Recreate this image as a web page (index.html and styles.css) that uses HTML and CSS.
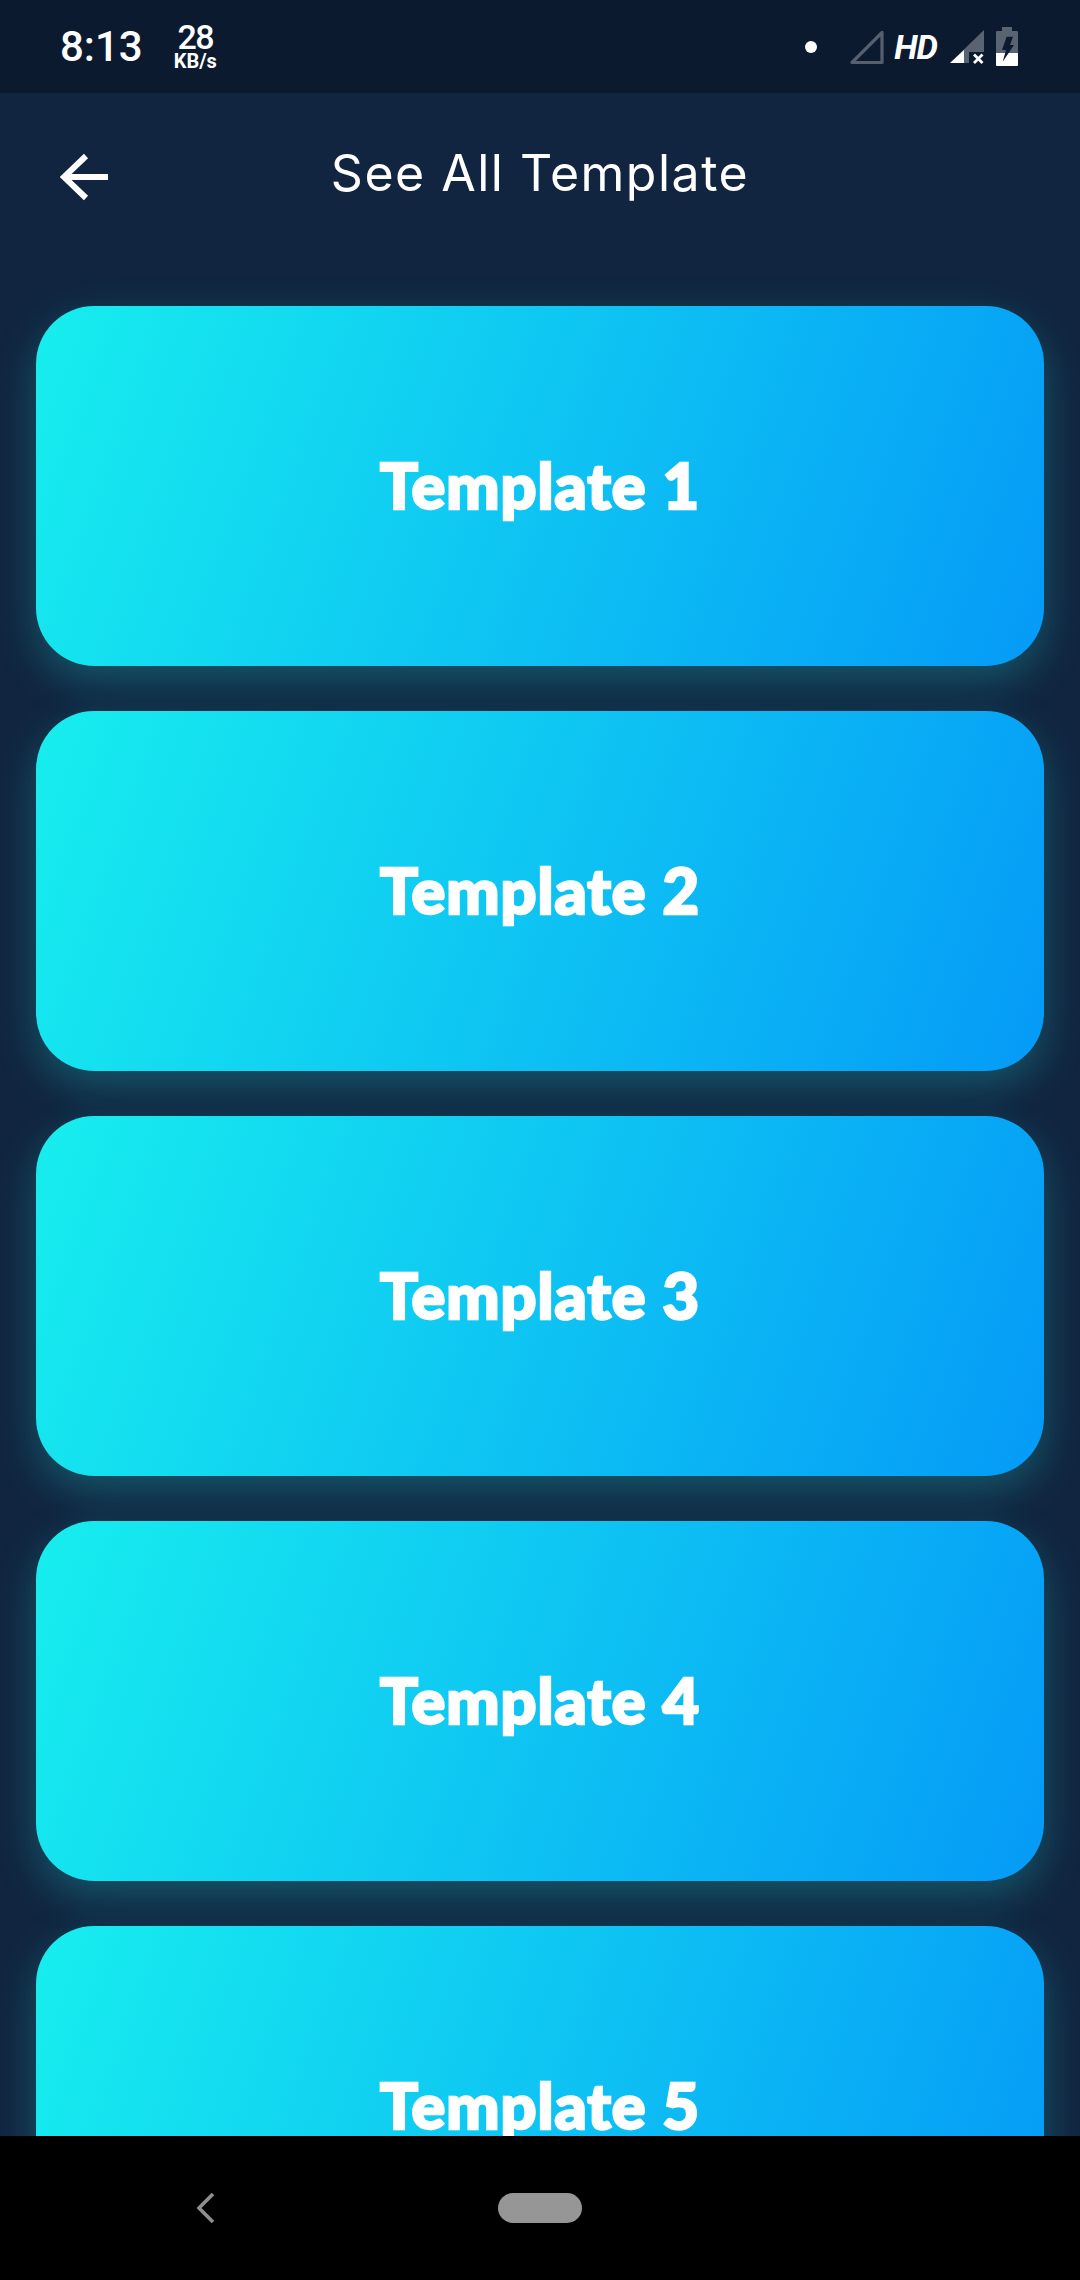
FILE: index.html
```html
<!DOCTYPE html>
<html lang="en">
<head>
  <meta charset="UTF-8">
  <meta name="viewport" content="width=device-width, initial-scale=1.0">
  <title>See All Template</title>
  <link rel="stylesheet" href="styles.css">
</head>
<body>
  <div class="screen">
    <div class="statusbar">
      <div class="status-left">
        <span class="time">8:13</span>
        <div class="speed">
          <span class="speed-num">28</span>
          <span class="speed-unit">KB/s</span>
        </div>
      </div>
      <div class="status-right">
        <span class="dot"></span>
        <svg class="ico-mobile" width="34" height="36" viewBox="0 0 34 36">
          <path d="M2 33.5 L32 3.5 V33.5 Z" fill="none" stroke="#565f6e" stroke-width="3.2" stroke-linejoin="round"/>
        </svg>
        <span class="hd">HD</span>
        <svg class="ico-signal" width="34" height="34" viewBox="0 0 34 34">
          <path d="M0 33 L34 0 V22 H19 V33 Z" fill="#5a6372"/>
          <path d="M0 33 L14 20 V33 Z" fill="#fff"/>
          <path d="M24 24.500 L32.500 33 M32.500 24.500 L24 33" stroke="#fff" stroke-width="2.800"/>
        </svg>
        <svg class="ico-battery" width="22" height="39" viewBox="0 0 22 39">
          <path d="M6 0 H16 V4 H21 Q22 4 22 5 V26 H0 V5 Q0 4 1 4 H6 Z" fill="#5a6372"/>
          <path d="M0 26 H22 V38 Q22 39 21 39 H1 Q0 39 0 38 Z" fill="#fff"/>
          <path d="M10.700 9.700 H17 L14 18 H18 L6.700 34.700 L10 23 H6 Z" fill="#0c1a30"/>
        </svg>
      </div>
    </div>

    <div class="page">
      <header class="topbar">
        <svg class="back" width="50" height="48" viewBox="0 0 50 48">
          <path d="M48 24 H4 M26 3 L4 24 L26 45" fill="none" stroke="#fff" stroke-width="6"/>
        </svg>
        <h1>See All Template</h1>
      </header>

      <main class="list">
        <a class="card" href="#">Template 1</a>
        <a class="card" href="#">Template 2</a>
        <a class="card" href="#">Template 3</a>
        <a class="card" href="#">Template 4</a>
        <a class="card" href="#">Template 5</a>
      </main>
    </div>

    <div class="navbar">
      <svg class="nav-back" width="18" height="32" viewBox="0 0 18 32">
        <path d="M16 2 L2 16 L16 30" fill="none" stroke="#8e8e8e" stroke-width="3.600"/>
      </svg>
      <span class="nav-home"></span>
    </div>
  </div>
</body>
</html>
```

FILE: styles.css
```css
* {
  margin: 0;
  padding: 0;
  box-sizing: border-box;
}
html, body {
  height: 100%;
  overflow: hidden;
  background-color: #112540;
}
.screen {
  display: flex;
  flex-direction: column;
  height: 2280px;
  width: 1080px;
}

/* status bar */
.statusbar {
  background-color: #0c1a30;
  color: #fff;
  height: 93px;
  flex-shrink: 0;
  display: flex;
  justify-content: space-between;
  align-items: center;
  padding: 0 62px 0 60px;
  font-family: Roboto, "Liberation Sans", sans-serif;
}
.status-left {
  display: flex;
  align-items: center;
  gap: 31px;
}
.time {
  font-size: 42px;
  font-weight: 500;
  line-height: 1;
}
.speed {
  display: flex;
  flex-direction: column;
  align-items: center;
}
.speed-num {
  font-size: 34px;
  font-weight: 500;
  line-height: 28px;
  letter-spacing: -1.500px;
}
.speed-unit {
  font-size: 20px;
  font-weight: 700;
  line-height: 20px;
}
.status-right {
  display: flex;
  align-items: center;
}
.dot {
  width: 12px;
  height: 12px;
  border-radius: 50%;
  background-color: #fff;
  margin-right: 33px;
}
.hd {
  font-size: 34px;
  font-weight: 700;
  font-style: italic;
  letter-spacing: -1px;
  line-height: 1;
  margin: 0 13px 0 10px;
}
.ico-battery {
  margin-left: 12px;
}

/* page */
.page {
  flex: 1;
  min-height: 0;
  overflow: hidden;
}
.topbar {
  display: grid;
  grid-template-columns: 1fr auto 1fr;
  align-items: center;
  height: 213px;
  padding: 0 60px 50px;
}
.back {
  margin-top: 5px;
}
.topbar h1 {
  color: #fff;
  font-family: Inter, "Liberation Sans", sans-serif;
  font-size: 50px;
  font-weight: 400;
  letter-spacing: 1.500px;
  margin-top: -4px;
}
.list {
  display: flex;
  flex-direction: column;
  gap: 45px;
  padding: 0 36px;
}
.card {
  flex-shrink: 0;
  display: flex;
  align-items: center;
  justify-content: center;
  height: 360px;
  padding-bottom: 4px;
  border-radius: 58px;
  background: linear-gradient(109.65deg, #17eeee, #059af7);
  box-shadow: 0 15px 40px rgba(29, 220, 217, 0.27);
  color: #fff;
  font-family: Lato, "Noto Sans", sans-serif;
  font-size: 63px;
  font-weight: 900;
  letter-spacing: 1px;
  text-decoration: none;
  -webkit-text-stroke: 2.500px #fff;
}

/* nav bar */
.navbar {
  height: 144px;
  flex-shrink: 0;
  background-color: #000;
  display: flex;
  align-items: center;
  padding-left: 197px;
}
.nav-home {
  width: 84px;
  height: 30px;
  border-radius: 15px;
  background-color: #969696;
  margin-left: 283px;
}
```
